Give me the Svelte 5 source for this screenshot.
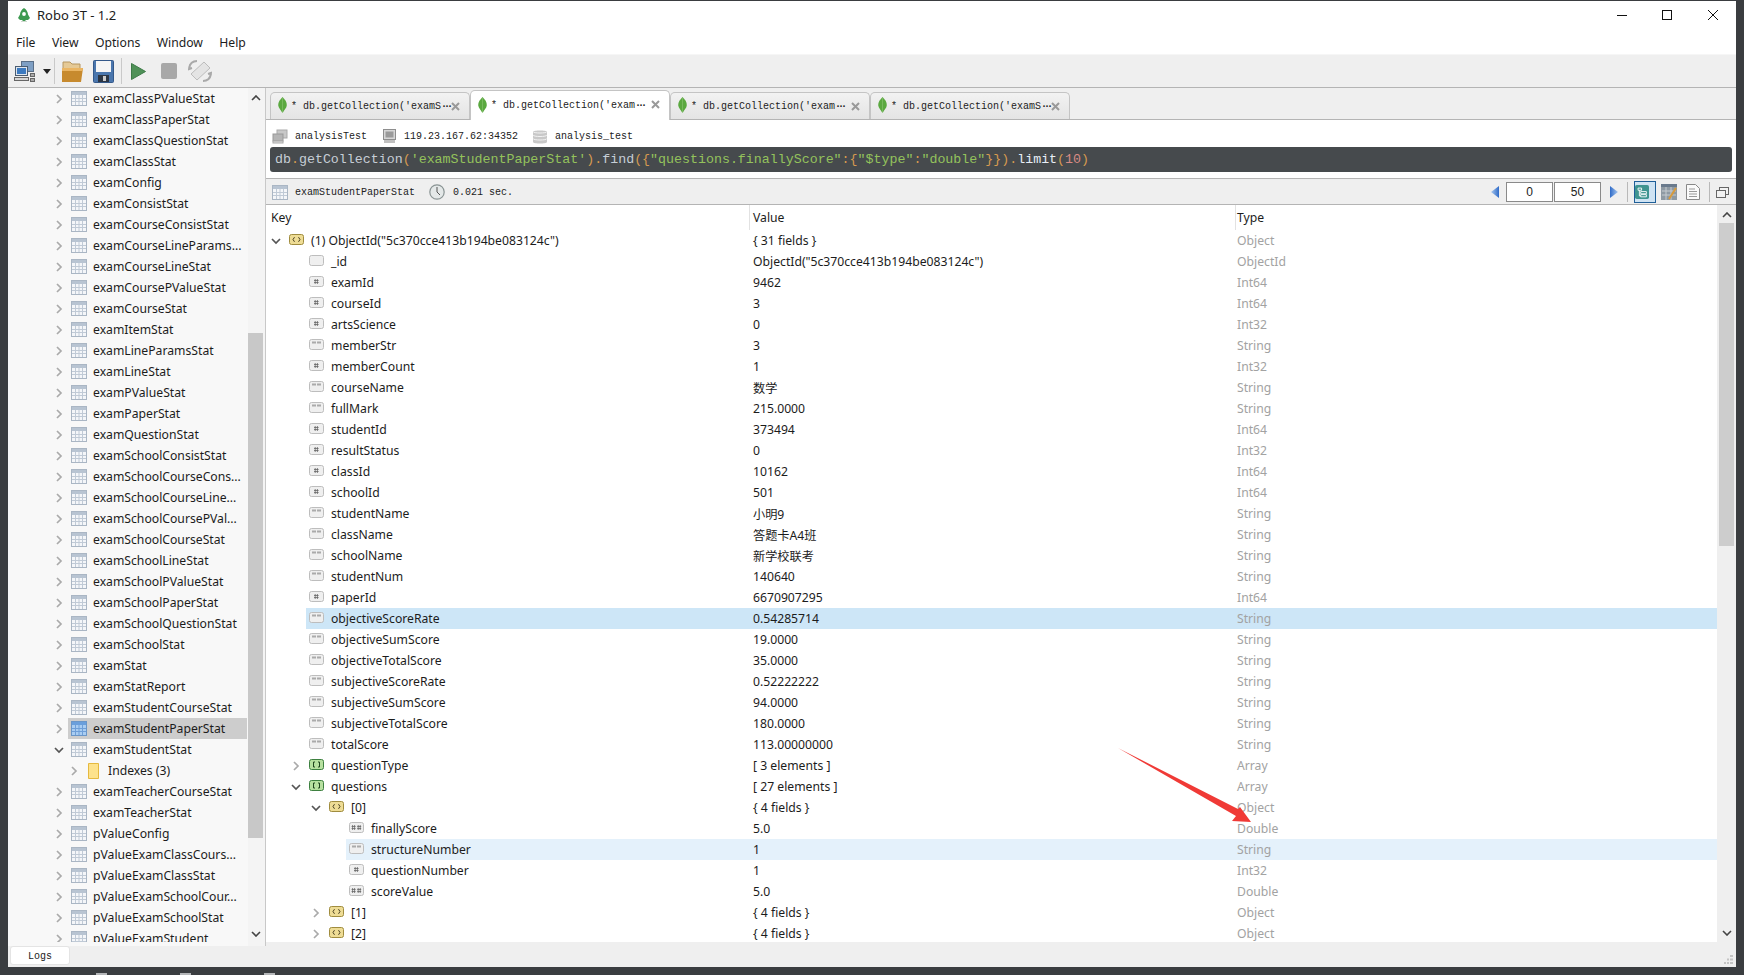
<script>
  const collections = [
    'examClassPValueStat','examClassPaperStat','examClassQuestionStat','examClassStat','examConfig','examConsistStat',
    'examCourseConsistStat','examCourseLineParams...','examCourseLineStat','examCoursePValueStat','examCourseStat',
    'examItemStat','examLineParamsStat','examLineStat','examPValueStat','examPaperStat','examQuestionStat',
    'examSchoolConsistStat','examSchoolCourseCons...','examSchoolCourseLine...','examSchoolCoursePVal...',
    'examSchoolCourseStat','examSchoolLineStat','examSchoolPValueStat','examSchoolPaperStat','examSchoolQuestionStat',
    'examSchoolStat','examStat','examStatReport','examStudentCourseStat','examStudentPaperStat','examStudentStat',
    '#Indexes (3)','examTeacherCourseStat','examTeacherStat','pValueConfig','pValueExamClassCours...','pValueExamClassStat',
    'pValueExamSchoolCour...','pValueExamSchoolStat','pValueExamStudent'
  ];
  const rows = [
    [0,'o','(1) ObjectId("5c370cce413b194be083124c")','{ 31 fields }','Object','open'],
    [1,'b','_id','ObjectId("5c370cce413b194be083124c")','ObjectId'],
    [1,'i','examId','9462','Int64'],
    [1,'i','courseId','3','Int64'],
    [1,'i','artsScience','0','Int32'],
    [1,'s','memberStr','3','String'],
    [1,'i','memberCount','1','Int32'],
    [1,'s','courseName','数学','String'],
    [1,'s','fullMark','215.0000','String'],
    [1,'i','studentId','373494','Int64'],
    [1,'i','resultStatus','0','Int32'],
    [1,'i','classId','10162','Int64'],
    [1,'i','schoolId','501','Int64'],
    [1,'s','studentName','小明9','String'],
    [1,'s','className','答题卡A4班','String'],
    [1,'s','schoolName','新学校联考','String'],
    [1,'s','studentNum','140640','String'],
    [1,'i','paperId','6670907295','Int64'],
    [1,'s','objectiveScoreRate','0.54285714','String',null,'sel'],
    [1,'s','objectiveSumScore','19.0000','String'],
    [1,'s','objectiveTotalScore','35.0000','String'],
    [1,'s','subjectiveScoreRate','0.52222222','String'],
    [1,'s','subjectiveSumScore','94.0000','String'],
    [1,'s','subjectiveTotalScore','180.0000','String'],
    [1,'s','totalScore','113.00000000','String'],
    [1,'a','questionType','[ 3 elements ]','Array','closed'],
    [1,'a','questions','[ 27 elements ]','Array','open'],
    [2,'o','[0]','{ 4 fields }','Object','open'],
    [3,'d','finallyScore','5.0','Double'],
    [3,'s','structureNumber','1','String',null,'hover'],
    [3,'i','questionNumber','1','Int32'],
    [3,'d','scoreValue','5.0','Double'],
    [2,'o','[1]','{ 4 fields }','Object','closed'],
    [2,'o','[2]','{ 4 fields }','Object','closed']
  ];
  const tabs = [
    ['examS', false], ['exam', true], ['exam', false], ['examS', false]
  ];
  const query = [
    ['db','c-id'],['.','c-op'],['getCollection','c-id'],['(','c-op'],["'examStudentPaperStat'",'c-str'],[')','c-op'],['.','c-op'],['find','c-id'],
    ['({','c-op'],['"questions.finallyScore"','c-str'],[':','c-op'],['{','c-op'],['"$type"','c-str'],[':','c-op'],['"double"','c-str'],['}})','c-op'],
    ['.','c-op'],['limit','c-fn'],['(','c-op'],['10','c-num'],[')','c-op']
  ];
</script>

{#snippet arrow(kind)}
  <svg class="arrow" width="10" height="10" viewBox="0 0 10 10">
    {#if kind === 'open'}
      <path d="M1 3l4 4 4-4" fill="none" stroke="#555" stroke-width="1.7"/>
    {:else if kind === 'closed'}
      <path d="M3 1l4 4-4 4" fill="none" stroke="#aaa" stroke-width="1.7"/>
    {/if}
  </svg>
{/snippet}

{#snippet tableIcon(active)}
  <svg class="ti" width="16" height="15" viewBox="0 0 16 15">
    <rect x=".5" y=".5" width="15" height="14" fill={active ? '#a9cdf2' : '#f4f6f9'} stroke={active ? '#6a96c8' : '#aab6c4'}/>
    <rect x="1" y="1" width="14" height="3" fill={active ? '#6a9fdc' : '#b8c4d2'}/>
    <path d="M1 7.5h14M1 10.5h14M4.5 4v10M8 4v10M11.5 4v10" stroke={active ? '#6f9fd8' : '#c0cad6'} stroke-width="1" fill="none"/>
  </svg>
{/snippet}

{#snippet leaf()}
  <svg class="leaf" width="9" height="16" viewBox="0 0 9 16">
    <path d="M4.5 0C7 2.5 9 5 8.8 8.2 8.6 11 6.4 12.6 4.9 15.5h-.8C3 12.8.5 11 .2 8.2 0 5 2.2 2.5 4.5 0z" fill="#5aa83f"/>
    <path d="M4.5 1v14" stroke="#8cc474" stroke-width=".6"/>
  </svg>
{/snippet}

{#snippet typeIcon(t)}
  <svg class="type" width="15" height="11" viewBox="0 0 15 11">
    {#if t === 'o'}
      <rect x=".5" y=".5" width="14" height="10" rx="2" fill="#eedc95" stroke="#a08c3e"/>
      <path d="M5.5 3.2L4 5.5l1.5 2.3M9.5 3.2L11 5.5 9.5 7.8" fill="none" stroke="#4a4020" stroke-width="1"/>
    {:else if t === 'a'}
      <rect x=".5" y=".5" width="14" height="10" rx="2" fill="#b7e0a0" stroke="#3d8040"/>
      <path d="M6 3H4.5v5H6M9 3h1.5v5H9" fill="none" stroke="#20451f" stroke-width="1"/>
    {:else}
      <rect x=".5" y=".5" width="14" height="10" rx="2" fill="#efefef" stroke="#bdbdbd"/>
      {#if t === 'i'}
        <path d="M6.2 3v5M8.4 3v5M5 4.5h4.6M5 6.5h4.6" stroke="#666" stroke-width=".8"/>
      {:else if t === 'd'}
        <path d="M3.6 3v5M5.6 3v5M2.6 4.5h4M2.6 6.5h4M9.2 3v5M11.2 3v5M8.2 4.5h4M8.2 6.5h4" stroke="#666" stroke-width=".8"/>
      {:else if t === 's'}
        <path d="M4 2.5v2M6 2.5v2M9 2.5v2M11 2.5v2" stroke="#666" stroke-width="1"/>
      {/if}
    {/if}
  </svg>
{/snippet}

<div class="window">
  <header class="titlebar">
    <svg class="logo" width="12" height="15" viewBox="0 0 12 15">
      <path d="M6 0C8.500 1.500 10 4 10 6.500L12 10 10 12H8L6 14 4 12H2L0 10 2 6.500C2 4 3.500 1.500 6 0z" fill="#3d9a50"/>
      <circle cx="6" cy="6" r="1.900" fill="#fff"/>
      <path d="M3 13.500h6" stroke="#cfd8cf"/>
    </svg>
    <span class="title">Robo 3T - 1.2</span>
    <div class="winctl">
      <svg width="120" height="12" viewBox="0 0 120 12">
        <path d="M6 6.500h10" stroke="#111"/>
        <rect x="51.500" y="1.500" width="9" height="9" fill="none" stroke="#111"/>
        <path d="M97 1l10 10M107 1L97 11" stroke="#111" fill="none"/>
      </svg>
    </div>
  </header>

  <nav class="menu">
    <span>File</span><span>View</span><span>Options</span><span>Window</span><span>Help</span>
  </nav>

  <div class="toolbar">
    <svg class="t-connect" width="21" height="23" viewBox="0 0 21 23">
      <rect x="7.500" y="1.500" width="12" height="10" fill="#7e9fc4" stroke="#5a6f88"/>
      <rect x="1.500" y="6.500" width="12" height="9" fill="#dfe6ee" stroke="#4a5c70"/>
      <rect x="3" y="8" width="9" height="6" fill="#3c7ac0"/>
      <rect x=".5" y="17.500" width="14" height="3" fill="#d5d5d5" stroke="#666"/>
      <rect x="16.500" y="13.500" width="4" height="3" fill="#aaa" stroke="#666"/>
      <rect x="16.500" y="18.500" width="4" height="3" fill="#aaa" stroke="#666"/>
    </svg>
    <svg class="t-drop" width="8" height="5" viewBox="0 0 8 5"><path d="M0 0h8L4 5z" fill="#222"/></svg>
    <i class="t-sep s1"></i>
    <svg class="t-folder" width="23" height="23" viewBox="0 0 23 23">
      <path d="M2 2h7l2 2h8v6H2z" fill="#e5c995" stroke="#b59660"/>
      <path d="M1 8h21l-2 14H1z" fill="#c78a2e"/>
      <path d="M1 8h21l-.5 3H1z" fill="#eab563"/>
    </svg>
    <svg class="t-save" width="21" height="23" viewBox="0 0 21 23">
      <rect x=".5" y=".5" width="20" height="22" rx="1" fill="#4a76ad" stroke="#34598a"/>
      <rect x="3" y="1" width="15" height="11" fill="#f5f5f5"/>
      <rect x="5" y="15" width="11" height="7" fill="#2c3644"/>
      <rect x="10" y="16" width="3" height="5" fill="#ccc"/>
    </svg>
    <i class="t-sep s2"></i>
    <svg class="t-play" width="15" height="17" viewBox="0 0 15 17"><path d="M.5.500L14.500 8.500.5 16.500z" fill="#4f9157" stroke="#3d7a47"/></svg>
    <svg class="t-stop" width="16" height="16" viewBox="0 0 16 16"><rect width="16" height="16" rx="2" fill="#a8a8a8"/></svg>
    <svg class="t-refresh" width="24" height="24" viewBox="0 0 24 24">
      <path d="M3 15L16 3l6 6L9 21z" fill="#e4e4e4" stroke="#bcbcbc"/>
      <path d="M1 9C2 4 5 2 9 2M2 6l-1 4 3-1" fill="none" stroke="#a9a9a9" stroke-width="2"/>
      <path d="M23 15c-1 5-4 7-8 7M22 18l1-4-3 1" fill="none" stroke="#a9a9a9" stroke-width="2"/>
    </svg>
  </div>

  <div class="body">
    <aside class="sidebar">
      <div class="list">
        {#each collections as name, i}
          {@const sub = name.startsWith('#')}
          <div class="sitem" class:sub>
            <span class="sbranch" class:bsub={sub}>{@render arrow(name === 'examStudentStat' ? 'open' : 'closed')}</span>
            <div class="sbody" class:current={i === 30}>
              {#if sub}
                <svg width="12" height="16" viewBox="0 0 12 16"><path d="M.5.500h10v15H.5z" fill="#fde28c" stroke="#e5b93f"/></svg>
              {:else}
                {@render tableIcon(i === 30)}
              {/if}
              <span>{sub ? name.slice(1) : name}</span>
            </div>
          </div>
        {/each}
      </div>
      <div class="sscroll">
        <svg class="up" width="10" height="6" viewBox="0 0 10 6"><path d="M1 5l4-4 4 4" fill="none" stroke="#444" stroke-width="1.600"/></svg>
        <i class="thumb"></i>
        <svg class="down" width="10" height="6" viewBox="0 0 10 6"><path d="M1 1l4 4 4-4" fill="none" stroke="#444" stroke-width="1.600"/></svg>
      </div>
    </aside>

    <main class="main">
      <div class="tabbar">
        {#each tabs as [txt, active]}
          <div class="tab" class:active>
            {@render leaf()}
            <span class="tabtext">* db.getCollection('{txt}<span class="dots">···</span></span>
            <svg class="x" width="9" height="9" viewBox="0 0 9 9"><path d="M1 1l7 7M8 1L1 8" stroke="#999" stroke-width="2"/></svg>
          </div>
        {/each}
      </div>

      <div class="querybox">
        <div class="info">
          <svg class="i1" width="16" height="15" viewBox="0 0 16 15">
            <rect x="5" y="1" width="10" height="8" fill="#c8c8c8" stroke="#aaa"/>
            <rect x="1" y="5" width="10" height="7" fill="#b5b5b5" stroke="#999"/>
            <rect x="1" y="12" width="10" height="2" fill="#ddd" stroke="#aaa"/>
          </svg>
          <span class="lbl a">analysisTest</span>
          <svg class="i2" width="13" height="14" viewBox="0 0 13 14">
            <rect x=".5" y=".5" width="12" height="10" fill="#d6d6d6" stroke="#8e8e8e"/>
            <rect x="2.500" y="2.500" width="8" height="6" fill="#9a9a9a"/>
            <rect x="1" y="11" width="11" height="3" fill="#c0c0c0"/>
          </svg>
          <span class="lbl b">119.23.167.62:34352</span>
          <svg class="i3" width="14" height="15" viewBox="0 0 14 15">
            <path d="M0 2.500C0 1 14 1 14 2.500V13c0 2-14 2-14 0z" fill="#c8c8c8"/>
            <path d="M0 2.500c0 2 14 2 14 0M0 6c0 2 14 2 14 0M0 9.500c0 2 14 2 14 0" fill="none" stroke="#f2f2f2"/>
          </svg>
          <span class="lbl c">analysis_test</span>
        </div>
        <div class="query">{#each query as [t, c]}<span class={c}>{t}</span>{/each}</div>
      </div>

      <div class="rbar">
        {@render tableIcon(false)}
        <span class="lbl d">examStudentPaperStat</span>
        <svg class="clock" width="16" height="16" viewBox="0 0 16 16">
          <circle cx="8" cy="8" r="7.200" fill="#e4e8e8" stroke="#8a9494" stroke-width="1.200"/>
          <path d="M8 3v5l3 3" fill="none" stroke="#555"/>
        </svg>
        <span class="lbl e">0.021 sec.</span>
        <div class="pager">
          <svg width="8" height="12" viewBox="0 0 8 12">
            <defs><linearGradient id="gl"><stop offset="0" stop-color="#a9c8ee"/><stop offset="1" stop-color="#2f6bc8"/></linearGradient></defs>
            <path d="M8 0v12L0 6z" fill="url(#gl)"/>
          </svg>
          <span class="num">0</span>
          <span class="num">50</span>
          <svg width="8" height="12" viewBox="0 0 8 12">
            <defs><linearGradient id="gr"><stop offset="0" stop-color="#2f6bc8"/><stop offset="1" stop-color="#a9c8ee"/></linearGradient></defs>
            <path d="M0 0v12l8-6z" fill="url(#gr)"/>
          </svg>
          <i class="vsep"></i>
          <span class="viewbtn">
            <svg width="16" height="16" viewBox="0 0 16 16">
              <rect width="16" height="16" rx="2" fill="#3f9490"/>
              <path d="M3.500 3.500h4v2.500h-4zM6.500 7.500h6.500V10H6.500zM6.500 11h6.500v2.500H6.500zM5 6v6.500h1.500" fill="none" stroke="#fff" stroke-width="1"/>
            </svg>
          </span>
          <svg class="tbl" width="16" height="16" viewBox="0 0 16 16">
            <rect width="16" height="16" fill="#8f9aa3"/>
            <rect y="0" width="16" height="3" fill="#6a7a8c"/>
            <path d="M1 7h14M1 11h14M5 3v13M10 3v13" stroke="#c5cbd0"/>
            <path d="M15 4L8 15" stroke="#d89a3a" stroke-width="2"/>
          </svg>
          <svg class="doc" width="14" height="16" viewBox="0 0 14 16">
            <path d="M.5.500h9l4 4v11H.5z" fill="#fafafa" stroke="#888"/>
            <path d="M3 5h6M3 7.500h8M3 10h8M3 12.500h8" stroke="#999"/>
          </svg>
          <i class="vsep v2"></i>
          <svg width="13" height="11" viewBox="0 0 13 11">
            <rect x="3.500" y=".5" width="9" height="7" fill="#f2f2f2" stroke="#666"/>
            <rect x=".5" y="3.500" width="9" height="7" fill="#f2f2f2" stroke="#666"/>
          </svg>
        </div>
      </div>

      <div class="treewrap">
        <div class="tree">
          <div class="thead">
            <span class="ck">Key</span><span class="cv">Value</span><span class="ct">Type</span>
          </div>
          {#each rows as [lvl, ty, key, val, type, exp, state]}
            <div class="row">
              <span class="branch" style:width="{20 + 20 * lvl}px">{@render arrow(exp)}</span>
              <div class="rowbody" class:sel={state === 'sel'} class:hover={state === 'hover'}>
                <span class="ck2" style:width="{464 - 20 * lvl}px">{@render typeIcon(ty)}<span>{key}</span></span>
                <span class="cv">{val}</span>
                <span class="ct">{type}</span>
              </div>
            </div>
          {/each}
        </div>
        <div class="vscroll">
          <svg class="up" width="10" height="6" viewBox="0 0 10 6"><path d="M1 5l4-4 4 4" fill="none" stroke="#444" stroke-width="1.600"/></svg>
          <i class="thumb2"></i>
          <svg class="down" width="10" height="6" viewBox="0 0 10 6"><path d="M1 1l4 4 4-4" fill="none" stroke="#444" stroke-width="1.600"/></svg>
        </div>
      </div>
    </main>
  </div>

  <footer class="footer">
    <span class="logs">Logs</span>
    <svg class="grip" width="9" height="9" viewBox="0 0 9 9"><path d="M6 0h3v2H6zM3 3.500h2v2H3zM6 3.500h3v2H6zM0 7h2v2H0zM3 7h2v2H3zM6 7h3v2H6z" fill="#c4c4c4"/></svg>
  </footer>

  <svg class="redarrow" width="140" height="80" viewBox="0 0 140 80">
    <path d="M0 0L120 61 122 59 133 74 114 73 118 68z" fill="#f03a36"/>
  </svg>
</div>

<div class="taskbar" aria-hidden="true"><i></i><i></i><i></i></div>

<style>
  :global(body) {
    margin: 0;
    background: #3a3d40;
    font-family: "Noto Sans", "Noto Sans CJK SC", sans-serif;
    font-size: 12.2px;
    color: #1c1c1c;
    overflow: hidden;
  }
  .window {
    position: relative;
    margin: 1px 0 0 8px;
    width: 1728px;
    height: 966px;
    display: flex;
    flex-direction: column;
    background: #efefef;
    overflow: hidden;
  }
  .titlebar {
    height: 33px;
    flex: none;
    background: #fff;
    display: flex;
    align-items: center;
    padding: 0 0 5px 10px;
    box-sizing: border-box;
  }
  .logo { margin-right: 7px; }
  .title { font-size: 13px; }
  .winctl { margin-left: auto; margin-right: 5px; display: flex; }
  .menu {
    height: 20px;
    flex: none;
    background: #fff;
    display: flex;
    gap: 16.4px;
    padding: 0 0 3px 8px;
    box-sizing: border-box;
    align-items: center;
    line-height: 17px;
    font-size: 12.2px;
  }
  .toolbar {
    height: 34px;
    flex: none;
    box-sizing: border-box;
    border-top: 1px solid #f6f6f6;
    border-bottom: 1px solid #b4b4b4;
    display: flex;
    align-items: center;
    background: #efefef;
    padding-left: 6px;
  }
  .t-drop { margin-left: 8px; }
  .t-sep { width: 1px; height: 26px; background: #c9c9c9; flex: none; }
  .s1 { margin-left: 3px; }
  .t-folder { margin-left: 6px; }
  .t-save { margin-left: 9px; }
  .s2 { margin-left: 7px; }
  .t-play { margin-left: 9px; }
  .t-stop { margin-left: 15px; }
  .t-refresh { margin-left: 11px; }

  .body { height: 858px; flex: none; display: flex; min-height: 0; }
  .sidebar {
    width: 257px;
    flex: none;
    display: flex;
    background: #f8f8f8;
    border-right: 1px solid #c8c8c8;
    height: 858px;
    overflow: hidden;
  }
  .list { width: 239px; flex: none; overflow: hidden; height: 854px; }
  .sitem { height: 21px; display: flex; align-items: center; }
  .sbranch { width: 60px; flex: none; display: flex; justify-content: flex-end; padding-right: 4px; box-sizing: border-box; }
  .sbranch.bsub { width: 75px; }
  .sbody { flex: 1; height: 21px; display: flex; align-items: center; gap: 6px; padding-left: 3px; white-space: nowrap; min-width: 0; }
  .sub .sbody { padding-left: 5px; gap: 8px; }
  .sbody.current { background: #cdcdcd; }
  .ti { flex: none; }
  .arrow { flex: none; }
  .sscroll {
    width: 17px;
    flex: none;
    position: relative;
    background: #f4f4f4;
    margin-left: 1px;
  }
  .thumb { position: absolute; left: 0; top: 245px; width: 15px; height: 505px; background: #c8c8c8; }
  .up { position: absolute; left: 3px; top: 7px; }
  .down { position: absolute; left: 3px; bottom: 9px; }

  .main { flex: 1; min-width: 0; display: flex; flex-direction: column; }
  .tabbar {
    height: 32px;
    flex: none;
    display: flex;
    align-items: flex-end;
    padding-left: 4px;
    border-bottom: 1px solid #b4b4b4;
    box-sizing: border-box;
  }
  .tab {
    width: 200px;
    height: 27px;
    box-sizing: border-box;
    background: linear-gradient(#f2f2f2, #e4e4e4);
    border: 1px solid #c4c4c4;
    border-bottom: 0;
    border-radius: 5px 5px 0 0;
    display: flex;
    align-items: center;
    padding: 0 7px;
    position: relative;
  }
  .tab.active {
    background: #fff;
    height: 30px;
    margin-bottom: -1px;
    z-index: 1;
  }
  .leaf { flex: none; margin-top: -2px; }
  .tabtext {
    font-family: "Liberation Mono", monospace;
    font-size: 10px;
    margin-left: 4px;
    white-space: nowrap;
    color: #222;
  }
  .dots { letter-spacing: -3px; font-weight: bold; }
  .x { position: absolute; right: 9px; top: 9px; }

  .querybox { height: 59px; flex: none; background: #fff; box-sizing: border-box; padding: 0 4px; border-bottom: 1px solid #b4b4b4; }
  .info { height: 27px; display: flex; align-items: center; padding: 5px 0 0 2px; box-sizing: border-box; }
  .lbl { font-family: "Liberation Mono", monospace; font-size: 10px; color: #222; white-space: nowrap; }
  .a { margin-left: 7px; }
  .i2 { margin-left: 16px; }
  .b { margin-left: 8px; }
  .i3 { margin-left: 15px; }
  .c { margin-left: 8px; }
  .query {
    height: 25px;
    background: #464a4d;
    border-radius: 3px;
    font-family: "Liberation Mono", monospace;
    font-size: 13.3px;
    line-height: 26px;
    padding-left: 5px;
    white-space: pre;
  }
  .c-id { color: #c6ced6; }
  .c-op { color: #d69a50; }
  .c-str { color: #94c25c; }
  .c-fn { color: #e8eef6; }
  .c-num { color: #d98a84; }

  .rbar {
    height: 26px;
    flex: none;
    box-sizing: border-box;
    border-bottom: 1px solid #b4b4b4;
    display: flex;
    align-items: center;
    padding: 1px 0 0 6px;
  }
  .d { margin-left: 7px; }
  .clock { margin-left: 14px; }
  .e { margin-left: 8px; }
  .pager { margin-left: auto; display: flex; align-items: center; padding-right: 7px; }
  .num {
    width: 47px;
    height: 20px;
    box-sizing: border-box;
    border: 1px solid #8a8a8a;
    background: #fff;
    text-align: center;
    font-family: "Liberation Sans", sans-serif;
    font-size: 12px;
    line-height: 18px;
    margin-left: 1px;
  }
  .pager svg:first-child { margin-right: 6px; }
  .num + svg { margin-left: 9px; }
  .vsep { width: 1px; height: 20px; background: #b9b9b9; margin: 0 6px 0 9px; }
  .v2 { margin: 0 6px 0 9px; }
  .viewbtn { width: 22px; height: 22px; box-sizing: border-box; border: 1px solid #1f5f98; background: #cfe3f3; display: flex; align-items: center; justify-content: center; }
  .tbl { margin-left: 5px; }
  .doc { margin-left: 9px; }

  .treewrap { height: 737px; flex: none; background: #fff; display: flex; overflow: hidden; }
  .tree { width: 1451px; flex: none; overflow: hidden; }
  .thead { height: 25px; display: flex; align-items: center; border-bottom: 0; }
  .thead .ck { width: 484px; padding-left: 5px; box-sizing: border-box; border-right: 1px solid #e2e2e2; height: 100%; line-height: 25px; }
  .thead .cv { width: 486px; box-sizing: border-box; padding-left: 3px; border-right: 1px solid #e2e2e2; height: 100%; line-height: 25px; }
  .thead .ct { padding-left: 1px; }
  .row { height: 21px; display: flex; }
  .branch { flex: none; display: flex; justify-content: flex-end; align-items: center; padding-right: 5px; box-sizing: border-box; }
  .rowbody { flex: 1; min-width: 0; display: flex; align-items: center; white-space: nowrap; }
  .rowbody.sel { background: #cde6f7; }
  .rowbody.hover { background: #e4f1fb; }
  .ck2 { flex: none; display: flex; align-items: center; gap: 7px; padding-left: 3px; box-sizing: border-box; }
  .type { flex: none; margin-top: -2px; }
  .rowbody .cv { width: 486px; flex: none; box-sizing: border-box; padding-left: 3px; }
  .rowbody .ct { padding-left: 1px; color: #a2a2a2; }
  .vscroll { flex: 1; background: #efefef; position: relative; }
  .thumb2 { position: absolute; left: 2px; top: 18px; width: 15px; height: 323px; background: #cdcdcd; }
  .vscroll .up { left: 5px; top: 7px; }
  .vscroll .down { left: 5px; bottom: 6px; }

  .footer {
    flex: 1;
    display: flex;
    align-items: flex-start;
    padding: 0 0 0 2px;
    position: relative;
    background: #efefef;
  }
  .logs {
    width: 60px;
    height: 19px;
    background: #fff;
    border-radius: 3px;
    border: 1px solid #e4e4e4;
    box-sizing: border-box;
    text-align: center;
    font-family: "Liberation Mono", monospace;
    font-size: 10px;
    line-height: 19px;
  }
  .grip { position: absolute; right: 3px; bottom: 3px; }
  .redarrow { position: absolute; left: 1110px; top: 747px; pointer-events: none; }
  .taskbar { display: flex; gap: 73px; padding: 6px 0 0 96px; height: 2px; overflow: hidden; }
  .taskbar i { width: 11px; height: 2px; background: #b4b6b8; display: block; }
</style>
